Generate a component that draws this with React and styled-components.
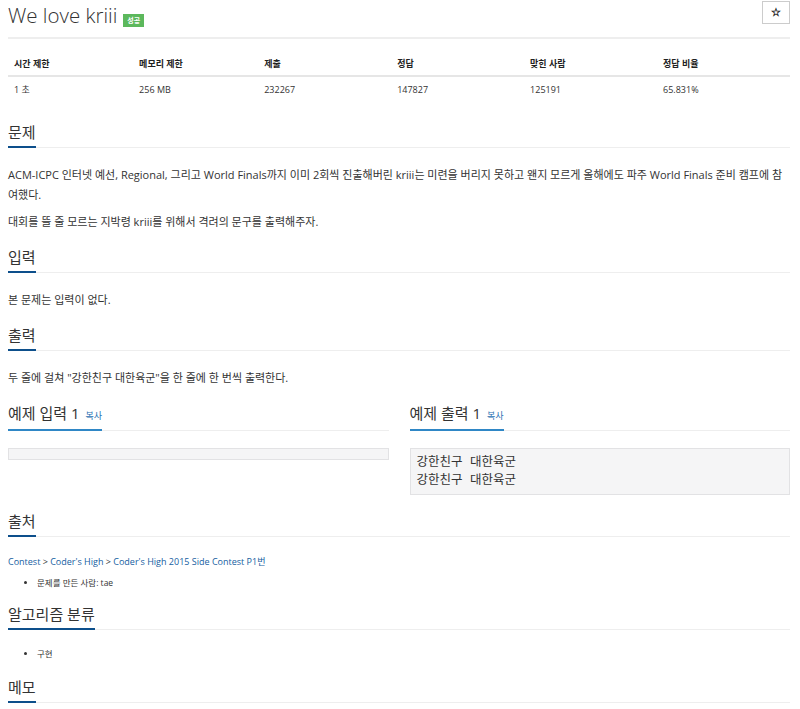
import React from 'react';
import styled, { createGlobalStyle } from 'styled-components';

const GlobalStyle = createGlobalStyle`
  body {
    margin: 0;
    background: #fff;
    color: #333;
    font-family: "Open Sans", "Noto Sans CJK KR", sans-serif;
  }
`;

const Page = styled.div`
  padding: 0 10px 20px 8px;
`;

const TitleRow = styled.div`
  display: flex;
  justify-content: space-between;
  align-items: flex-start;
  height: 37px;
  border-bottom: 2px solid #eee;
`;

const Title = styled.h1`
  margin: 0;
  font-size: 20.5px;
  font-weight: 300;
  line-height: 30px;
  color: #333;
`;

const Badge = styled.span`
  display: inline-block;
  margin-left: 6px;
  padding: 0 4px;
  height: 13px;
  line-height: 13px;
  vertical-align: 0;
  background: #5cb85c;
  color: #fff;
  font-size: 7px;
  font-weight: 700;
`;

const StarButton = styled.button`
  margin-top: 1px;
  width: 28px;
  height: 23px;
  padding: 0;
  border: 1px solid #ccc;
  background: #fff;
  color: #111;
  font-size: 11px;
  font-weight: 700;
  line-height: 1;
`;

const StatsTable = styled.table`
  width: 100%;
  margin-top: 12px;
  border-collapse: collapse;
  font-size: 9px;

  th, td {
    padding: 0 6px;
    height: 24px;
    text-align: left;
  }
  th {
    font-weight: 700;
    color: #222;
    border-bottom: 2px solid #e6e6e6;
  }
`;

const Section = styled.section`
  margin-top: ${(p) => p.$top || 15}px;
`;

const Headline = styled.div`
  display: flex;
  align-items: flex-end;
  border-bottom: 1px solid #eee;
`;

const Heading = styled.h2`
  margin: 0 0 -1px;
  padding-bottom: 3px;
  font-size: 15px;
  font-weight: 400;
  line-height: 21px;
  color: #333;
  border-bottom: 2px solid ${(p) => (p.$light ? '#2f87c6' : '#0d4f8b')};
`;

const CopyLink = styled.span`
  margin-left: 6px;
  font-size: 9px;
  color: #1f6fb2;
`;

const Body = styled.div`
  margin-top: ${(p) => p.$top || 17}px;
  display: flex;
  flex-direction: column;
  gap: ${(p) => p.$gap || 7}px;
  font-size: ${(p) => p.$size || 11}px;
  line-height: ${(p) => p.$line || 20}px;
`;

const Para = styled.p`
  margin: 0;
`;

const SampleGrid = styled.div`
  display: grid;
  grid-template-columns: 1fr 1fr;
  gap: 21px;
`;

const SampleBox = styled.pre`
  margin: 17px 0 0;
  padding: 5px 6px 4px;
  min-height: 1px;
  background: #f5f5f6;
  border: 1px solid #e2e2e4;
  font-family: "Liberation Mono", "Noto Sans CJK KR", monospace;
  font-size: 12.5px;
  line-height: 18px;
  color: #333;
`;

const Crumbs = styled.div`
  font-size: 9px;
  color: #333;
`;

const Crumb = styled.a`
  color: #15609f;
  text-decoration: none;
`;

const List = styled.ul`
  margin: 0;
  padding-left: 29px;
  font-size: 8.5px;
`;

const Sample = ({ label, lines }) => (
  <div>
    <Headline>
      <Heading $light>
        {label}
        <CopyLink>복사</CopyLink>
      </Heading>
    </Headline>
    <SampleBox>{lines.join('\n')}</SampleBox>
  </div>
);

const stats = [
  ['시간 제한', '1 초', '16%'],
  ['메모리 제한', '256 MB', '16%'],
  ['제출', '232267', '17%'],
  ['정답', '147827', '17%'],
  ['맞힌 사람', '125191', '17%'],
  ['정답 비율', '65.831%', '17%'],
];

export default function App() {
  return (
    <Page>
      <GlobalStyle />
      <TitleRow>
        <Title>
          We love kriii<Badge>성공</Badge>
        </Title>
        <StarButton>☆</StarButton>
      </TitleRow>

      <StatsTable>
        <thead>
          <tr>
            {stats.map(([h, , w]) => (
              <th key={h} style={{ width: w }}>{h}</th>
            ))}
          </tr>
        </thead>
        <tbody>
          <tr>
            {stats.map(([h, v]) => (
              <td key={h}>{v}</td>
            ))}
          </tr>
        </tbody>
      </StatsTable>

      <Section $top={21}>
        <Headline><Heading>문제</Heading></Headline>
        <Body>
          <Para>
            ACM-ICPC 인터넷 예선, Regional, 그리고 World Finals까지 이미 2회씩 진출해버린 kriii는 미련을 버리지 못하고 왠지 모르게 올해에도 파주 World Finals 준비 캠프에 참여했다.
          </Para>
          <Para>대회를 뜰 줄 모르는 지박령 kriii를 위해서 격려의 문구를 출력해주자.</Para>
        </Body>
      </Section>

      <Section>
        <Headline><Heading>입력</Heading></Headline>
        <Body><Para>본 문제는 입력이 없다.</Para></Body>
      </Section>

      <Section>
        <Headline><Heading>출력</Heading></Headline>
        <Body><Para>두 줄에 걸쳐 "강한친구 대한육군"을 한 줄에 한 번씩 출력한다.</Para></Body>
      </Section>

      <Section>
        <SampleGrid>
          <Sample label="예제 입력 1" lines={['']} />
          <Sample label="예제 출력 1" lines={['강한친구 대한육군', '강한친구 대한육군']} />
        </SampleGrid>
      </Section>

      <Section $top={16}>
        <Headline><Heading>출처</Heading></Headline>
        <Body $top={17} $size={8.5} $line={16} $gap={5}>
          <Crumbs>
            <Crumb>Contest</Crumb> &gt; <Crumb>Coder's High</Crumb> &gt; <Crumb>Coder's High 2015 Side Contest</Crumb> <Crumb>P1번</Crumb>
          </Crumbs>
          <List><li>문제를 만든 사람: tae</li></List>
        </Body>
      </Section>

      <Section $top={13}>
        <Headline><Heading>알고리즘 분류</Heading></Headline>
        <Body $top={16} $size={8.5} $line={16}>
          <List><li>구현</li></List>
        </Body>
      </Section>

      <Section $top={15}>
        <Headline><Heading>메모</Heading></Headline>
      </Section>
    </Page>
  );
}
